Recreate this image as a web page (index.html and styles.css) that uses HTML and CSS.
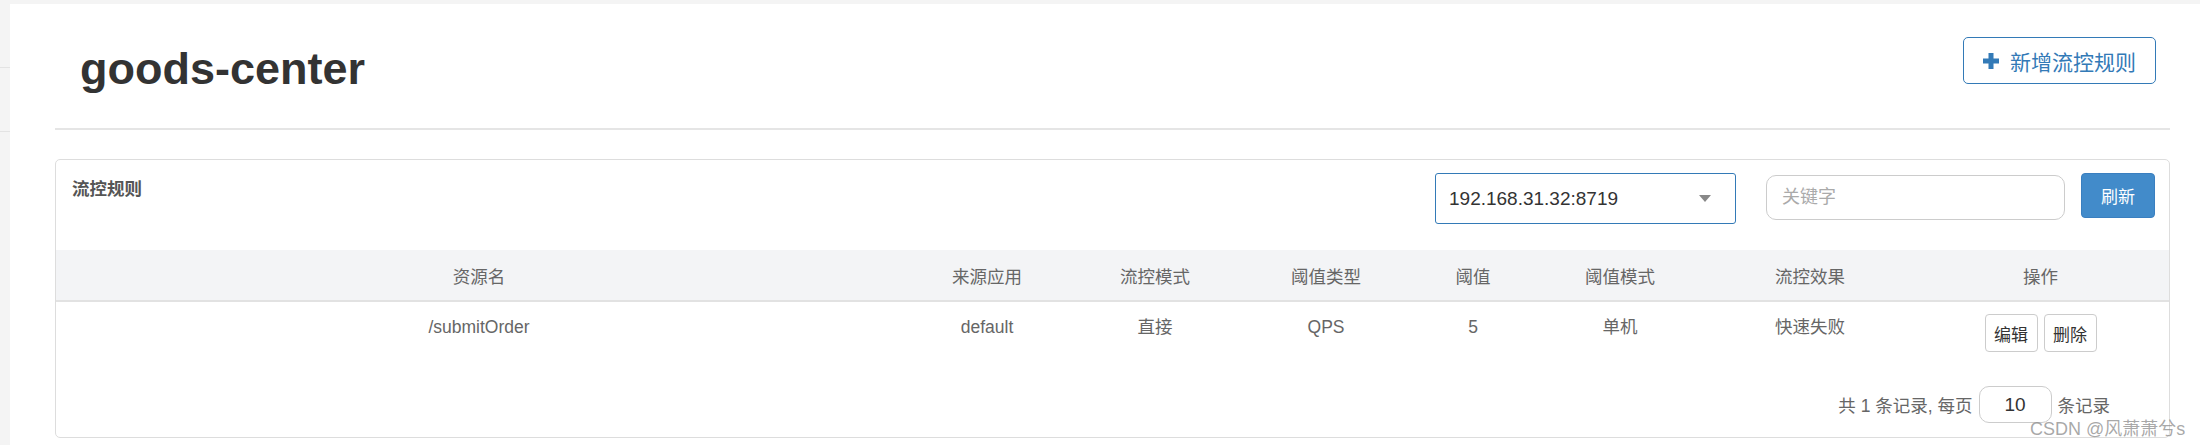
FILE: index.html
```html
<!DOCTYPE html>
<html>
<head>
  <meta charset="utf-8">
  <link rel="stylesheet" href="styles.css">
</head>
<body>
  <div class="layout">
    <div class="sidebar">
      <div class="side-item"></div>
      <div class="side-item"></div>
    </div>

    <div class="main">
      <div class="page-head">
        <h1 class="page-title">goods-center</h1>
        <button class="btn-add">
          <svg class="plus" viewBox="0 0 16 16" width="16" height="16"><rect x="5.5" y="0" width="5" height="16"/><rect x="0" y="5.5" width="16" height="5"/></svg>
          新增流控规则
        </button>
      </div>
      <div class="divider"></div>

      <div class="panel">
        <div class="panel-head">
          <div class="panel-title">流控规则</div>
          <div class="tools">
            <div class="machine-select">
              <span>192.168.31.32:8719</span>
              <span class="caret"></span>
            </div>
            <input class="search" type="text" placeholder="关键字">
            <button class="btn-refresh">刷新</button>
          </div>
        </div>

        <table class="rules">
          <colgroup>
            <col style="width:846px"><col style="width:170px"><col style="width:166px"><col style="width:176px">
            <col style="width:118px"><col style="width:176px"><col style="width:204px"><col style="width:257px">
          </colgroup>
          <thead>
            <tr>
              <th>资源名</th><th>来源应用</th><th>流控模式</th><th>阈值类型</th>
              <th>阈值</th><th>阈值模式</th><th>流控效果</th><th>操作</th>
            </tr>
          </thead>
          <tbody>
            <tr>
              <td>/submitOrder</td><td>default</td><td>直接</td><td>QPS</td>
              <td>5</td><td>单机</td><td>快速失败</td>
              <td class="ops"><button class="btn-op">编辑</button><button class="btn-op">删除</button></td>
            </tr>
          </tbody>
        </table>

        <div class="pager">
          <span>共 1 条记录, 每页</span>
          <input class="page-size" type="text" value="10">
          <span>条记录</span>
        </div>
      </div>
    </div>
  </div>

  <div class="watermark">CSDN @风萧萧兮s</div>
</body>
</html>
```

FILE: styles.css
```css
body, html {
  height: 100%;
  margin: 0;
  font-family: "Liberation Sans", Arial, "Noto Sans CJK SC", sans-serif;
  background-color: #f4f4f4;
  color: #333;
}
.layout {
  display: flex;
  height: 100%;
  padding-top: 4px;
  box-sizing: border-box;
}
.sidebar {
  width: 10px;
  flex-shrink: 0;
}
.side-item {
  height: 63px;
  border-bottom: 1px solid #e3e3e3;
}
.main {
  flex: 1;
  background-color: #fff;
  padding: 0 30px 0 45px;
}

/* page header */
.page-head {
  display: flex;
  justify-content: space-between;
  align-items: flex-start;
  padding: 33px 14px 0 25px;
}
.page-title {
  margin: 7px 0 0 0;
  font-size: 45px;
  line-height: 50px;
  font-weight: bold;
  color: #333;
}
.btn-add {
  display: flex;
  align-items: center;
  height: 47px;
  padding: 0 19px 0 19px;
  border: 1px solid #337ab7;
  border-radius: 5px;
  background: #fff;
  color: #337ab7;
  font-family: inherit;
  font-size: 21px;
}
.plus {
  fill: #337ab7;
  margin-right: 11px;
}
.divider {
  height: 2px;
  background-color: #e5e5e5;
  margin-top: 34px;
}

/* panel */
.panel {
  margin-top: 29px;
  border: 1px solid #ddd;
  border-radius: 5px;
}
.panel-head {
  display: flex;
  justify-content: space-between;
  align-items: flex-start;
  height: 90px;
  box-sizing: border-box;
  padding: 13px 14px 0 16px;
}
.panel-title {
  margin-top: 4px;
  font-size: 17.5px;
  line-height: 25px;
  font-weight: bold;
  color: #555;
}
.tools {
  display: flex;
  align-items: flex-start;
}
.machine-select {
  display: flex;
  align-items: center;
  justify-content: space-between;
  width: 301px;
  height: 51px;
  box-sizing: border-box;
  padding: 0 24px 0 13px;
  border: 1px solid #337ab7;
  border-radius: 3px;
  font-size: 19px;
  color: #333;
}
.caret {
  width: 0;
  height: 0;
  border-left: 6px solid transparent;
  border-right: 6px solid transparent;
  border-top: 7px solid #888;
}
.search {
  width: 299px;
  height: 45px;
  box-sizing: border-box;
  margin: 2px 0 0 30px;
  padding: 0 15px;
  border: 1px solid #ccc;
  border-radius: 10px;
  font-family: inherit;
  font-size: 18px;
  color: #333;
  outline: none;
}
.search::placeholder {
  color: #aaa;
}
.btn-refresh {
  width: 74px;
  height: 45px;
  margin-left: 16px;
  border: 1px solid #3a7fc0;
  border-radius: 4px;
  background-color: #428bca;
  color: #fff;
  font-family: inherit;
  font-size: 17px;
}

/* table */
.rules {
  width: 100%;
  border-collapse: collapse;
  table-layout: fixed;
  font-size: 17.5px;
  color: #666;
}
.rules th {
  height: 50px;
  padding: 0;
  font-weight: normal;
  background-color: #f3f4f6;
  border-bottom: 2px solid #e2e2e2;
  text-align: center;
}
.rules td {
  height: 64px;
  box-sizing: border-box;
  padding: 13px 0 0 0;
  line-height: 25px;
  text-align: center;
  vertical-align: top;
}
.rules td.ops {
  padding-top: 12px;
}
.btn-op {
  width: 53px;
  height: 38px;
  margin: 0 3px;
  padding: 0;
  border: 1px solid #ccc;
  border-radius: 4px;
  background: #fff;
  color: #333;
  font-family: inherit;
  font-size: 17px;
  vertical-align: top;
}

/* pager */
.pager {
  display: flex;
  justify-content: flex-end;
  align-items: center;
  gap: 6px;
  margin-top: 21px;
  padding: 0 59px 14px 0;
  font-size: 17.5px;
  color: #666;
}
.page-size {
  width: 73px;
  height: 37px;
  box-sizing: border-box;
  border: 1px solid #ccc;
  border-radius: 10px;
  text-align: center;
  font-family: inherit;
  font-size: 19px;
  color: #333;
  outline: none;
}

.watermark {
  position: absolute;
  left: 2030px;
  top: 414px;
  font-size: 18px;
  color: rgba(140, 140, 140, 0.75);
  white-space: nowrap;
}
```
